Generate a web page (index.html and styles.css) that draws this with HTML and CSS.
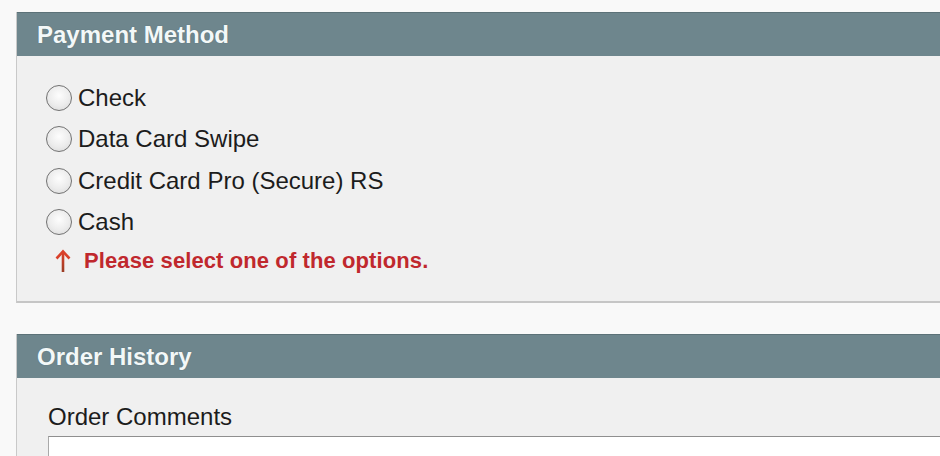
FILE: index.html
```html
<!DOCTYPE html>
<html>
<head>
<meta charset="utf-8">
<link rel="stylesheet" href="styles.css">
</head>
<body>
<div class="page">
  <section class="panel payment">
    <h2 class="panel-head">Payment Method</h2>
    <div class="panel-body">
      <label class="option"><input type="radio" name="pm" class="radio"><span>Check</span></label>
      <label class="option"><input type="radio" name="pm" class="radio"><span>Data Card Swipe</span></label>
      <label class="option"><input type="radio" name="pm" class="radio"><span>Credit Card Pro (Secure) RS</span></label>
      <label class="option"><input type="radio" name="pm" class="radio"><span>Cash</span></label>
      <div class="error">
        <svg class="arrow" width="16" height="24" viewBox="0 0 16 24" aria-hidden="true">
          <defs>
            <linearGradient id="ag" gradientUnits="userSpaceOnUse" x1="0" y1="2" x2="0" y2="23">
              <stop offset="0" stop-color="#e0402a"/>
              <stop offset="1" stop-color="#9a3c24"/>
            </linearGradient>
          </defs>
          <path d="M8 3 L8 23" stroke="url(#ag)" stroke-width="2.6" fill="none"/>
          <path d="M1.5 9.5 L8 2.5 L14.5 9.5" stroke="#d9402a" stroke-width="2.6" fill="none" stroke-linejoin="miter"/>
        </svg>
        <span>Please select one of the options.</span>
      </div>
    </div>
  </section>

  <section class="panel history">
    <h2 class="panel-head">Order History</h2>
    <div class="panel-body">
      <label class="field-label" for="comments">Order Comments</label>
      <textarea id="comments" class="comments"></textarea>
    </div>
  </section>
</div>
</body>
</html>
```

FILE: styles.css
```css
html, body {
  margin: 0;
  padding: 0;
  background: #f9f9f9;
  overflow: hidden;
}

body {
  font-family: "Liberation Sans", Arial, sans-serif;
  color: #1c1c1c;
}

.page {
  padding: 12px 0 0 16px;
  margin-right: -40px;
  display: flex;
  flex-direction: column;
  gap: 31px;
}

.panel {
  border-left: 1px solid #c9c9c9;
  background: #f0f0f0;
}

.panel-head {
  margin: 0;
  height: 43px;
  line-height: 43px;
  border-top: 1px solid #5c7278;
  background: #6e868d;
  color: #f3f8f8;
  font-size: 24px;
  font-weight: bold;
  padding-left: 20px;
  text-shadow: 0 0 1px rgba(40, 60, 65, 0.4);
}

.payment .panel-body {
  padding: 21px 0 22px 29px;
  border-bottom: 2px solid #c6c6c6;
}

.option {
  display: flex;
  align-items: center;
  gap: 6px;
  height: 41.5px;
  font-size: 24px;
}

.radio {
  appearance: none;
  -webkit-appearance: none;
  margin: 0;
  width: 26px;
  height: 26px;
  border-radius: 50%;
  border: 1.5px solid #727272;
  background: radial-gradient(circle at 50% 40%, #fdfdfd 0%, #ececec 55%, #d6d6d6 100%);
  box-sizing: border-box;
  flex: none;
}

.error {
  display: flex;
  align-items: center;
  gap: 13px;
  height: 36px;
  margin-left: 9px;
  color: #c0282d;
  font-size: 22px;
  font-weight: bold;
  letter-spacing: 0.1px;
}

.arrow {
  flex: none;
}

.history .panel-body {
  padding: 25px 0 0 31px;
  height: 53px;
}

.field-label {
  display: block;
  font-size: 24px;
  line-height: 28px;
  margin-bottom: 5px;
}

.comments {
  display: block;
  width: 100%;
  height: 40px;
  box-sizing: border-box;
  border: 1px solid #a9a9a9;
  border-top-color: #8f8f8f;
  background: #fff;
  resize: none;
  margin: 0;
}
```
